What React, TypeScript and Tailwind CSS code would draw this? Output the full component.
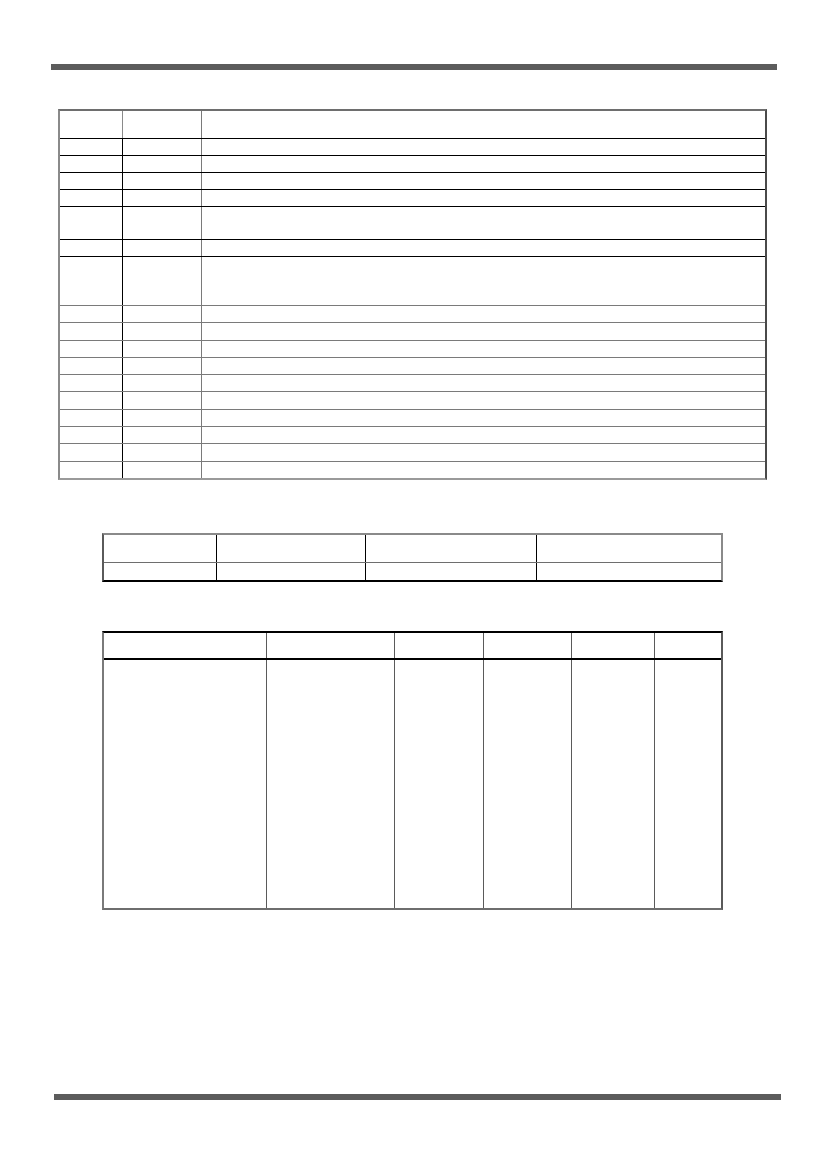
import React from 'react';

// heights of the body rows of the first table (px)
const firstRows: { h: string; line: string }[] = [
  { h: 'h-[17px]', line: 'border-black' },
  { h: 'h-[17px]', line: 'border-black' },
  { h: 'h-[17px]', line: 'border-black' },
  { h: 'h-[17px]', line: 'border-black' },
  { h: 'h-[33px]', line: 'border-black' },
  { h: 'h-[17px]', line: 'border-black' },
  { h: 'h-[49px]', line: 'border-[#7a7a7a]' },
  { h: 'h-[17.3px]', line: 'border-[#7a7a7a]' },
  { h: 'h-[17.3px]', line: 'border-[#7a7a7a]' },
  { h: 'h-[17.3px]', line: 'border-[#7a7a7a]' },
  { h: 'h-[17.3px]', line: 'border-[#7a7a7a]' },
  { h: 'h-[17.3px]', line: 'border-[#7a7a7a]' },
  { h: 'h-[17.3px]', line: 'border-[#7a7a7a]' },
  { h: 'h-[17.3px]', line: 'border-[#7a7a7a]' },
  { h: 'h-[17.3px]', line: 'border-[#7a7a7a]' },
  { h: 'h-[17.3px]', line: 'border-[#7a7a7a]' },
  { h: 'h-[16px]', line: 'border-[#7a7a7a]' },
];

const FirstTable: React.FC = () => (
  <div className="ml-[58px] w-[709px] border-2 border-[#8a8a8a] border-t-[#6e6e6e] border-r-[#4a4a4a] border-b-[#9a9a9a]">
    <div className="flex h-[28px] border-b border-black">
      <div className="w-[63px] border-r border-[#8a8a8a]" />
      <div className="w-[79px] border-r border-[#7a7a7a]" />
      <div className="flex-1" />
    </div>
    {firstRows.map((row, i) => (
      <div
        key={i}
        className={`flex ${row.h} ${i < firstRows.length - 1 ? 'border-b' : ''} ${row.line}`}
      >
        <div className="w-[63px] border-r border-black" />
        <div className="w-[79px] border-r border-[#7a7a7a]" />
        <div className="flex-1" />
      </div>
    ))}
  </div>
);

const SecondTable: React.FC = () => (
  <div className="ml-[102px] w-[621px] border-2 border-[#8a8a8a] border-l-[#5a5a5a] border-b-black">
    <div className="flex h-[28px] border-b border-[#6e6e6e]">
      <div className="w-[113px] border-r border-black" />
      <div className="w-[149px] border-r border-black" />
      <div className="w-[171px] border-r border-black" />
      <div className="flex-1" />
    </div>
    <div className="flex h-[17px]">
      <div className="w-[113px] border-r border-black" />
      <div className="w-[149px] border-r border-black" />
      <div className="w-[171px] border-r border-black" />
      <div className="flex-1" />
    </div>
  </div>
);

const ThirdTable: React.FC = () => {
  const cols = ['w-[163px]', 'w-[128px]', 'w-[89px]', 'w-[88px]', 'w-[83px]'];
  return (
    <div className="ml-[102px] w-[621px] border-2 border-[#9a9a9a] border-t-black border-l-[#7a7a7a] border-r-[#5a5a5a] border-b-[#6e6e6e]">
      <div className="flex h-[27px] border-b-2 border-black">
        {cols.map((c, i) => (
          <div key={i} className={`${c} border-r border-[#5a5a5a]`} />
        ))}
        <div className="flex-1" />
      </div>
      <div className="flex h-[248px]">
        {cols.map((c, i) => (
          <div key={i} className={`${c} border-r border-[#5a5a5a]`} />
        ))}
        <div className="flex-1" />
      </div>
    </div>
  );
};

const App: React.FC = () => {
  return (
    <div className="w-[827px] h-[1169px] bg-white overflow-hidden" style={{ fontFamily: '"Liberation Sans", Arial, sans-serif' }}>
      <div className="pt-[64px]">
        <div className="ml-[51px] w-[726px] h-[6px] bg-[#5c5c5c]" />
      </div>

      <div className="mt-[39px]">
        <FirstTable />
      </div>

      <div className="mt-[53px]">
        <SecondTable />
      </div>

      <div className="mt-[49px]">
        <ThirdTable />
      </div>

      <div className="mt-[184px]">
        <div className="ml-[54px] w-[727px] h-[6px] bg-[#5c5c5c]" />
      </div>
    </div>
  );
};

export default App;
